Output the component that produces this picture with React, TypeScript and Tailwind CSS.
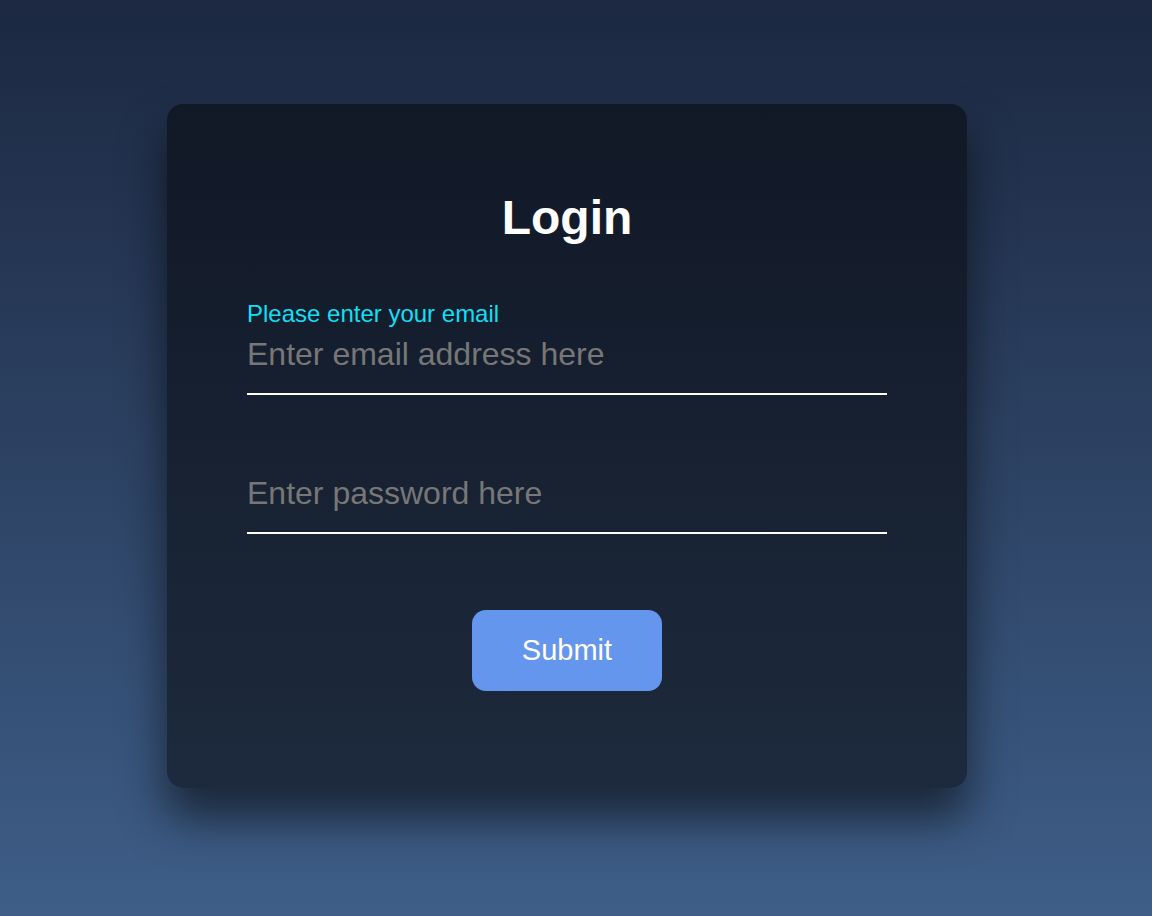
import { useState } from "react";

export default function App() {
  const [email, setEmail] = useState("");
  const [password, setPassword] = useState("");

  return (
    <div
      className="min-h-[916px] w-full bg-gradient-to-b from-[#1c2841] to-[#3e5e88] pt-[104px] pr-[18px] flex justify-center"
      style={{ fontFamily: '"Liberation Sans", Arial, sans-serif' }}
    >
      <div className="w-[800px] h-[684px] rounded-2xl bg-gradient-to-b from-[#111826] to-[#1d2a3d] px-20 pt-20 shadow-[0_30px_45px_rgba(0,0,0,0.55)] flex flex-col">
        <h1 className="text-[48px] leading-[68px] font-bold text-white text-center">
          Login
        </h1>

        <div className="mt-12 flex flex-col">
          <label
            htmlFor="email"
            className="text-[24px] leading-[28px] h-[28px] text-[#13dff3] mb-[2px]"
          >
            Please enter your email
          </label>
          <input
            id="email"
            type="email"
            value={email}
            onChange={(e) => setEmail(e.target.value)}
            placeholder="Enter email address here"
            className="w-full bg-transparent outline-none text-white text-[32px] leading-[40px] pt-1 pb-[19px] border-b-2 border-white placeholder:text-[#777777]"
          />
        </div>

        <div className="mt-[44px] flex flex-col">
          <div className="h-[28px] mb-[2px]" />
          <input
            id="password"
            type="password"
            value={password}
            onChange={(e) => setPassword(e.target.value)}
            placeholder="Enter password here"
            className="w-full bg-transparent outline-none text-white text-[32px] leading-[40px] pt-1 pb-[19px] border-b-2 border-white placeholder:text-[#777777]"
          />
        </div>

        <div className="mt-[76px] flex justify-center">
          <button
            type="submit"
            className="w-[190px] h-[81px] rounded-[14px] bg-[#6596ee] text-white text-[29px]"
          >
            Submit
          </button>
        </div>
      </div>
    </div>
  );
}
